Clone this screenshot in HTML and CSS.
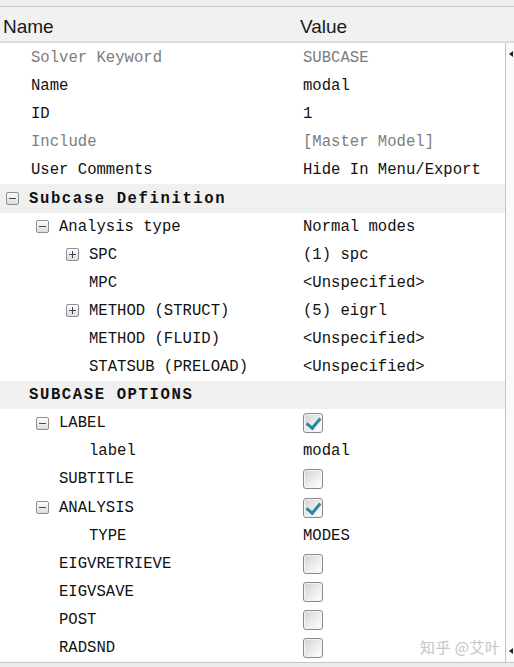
FILE: index.html
```html
<!DOCTYPE html>
<html>
<head>
<meta charset="utf-8">
<link rel="stylesheet" href="styles.css">
</head>
<body>
<div class="panel">
  <div class="topstrip"></div>
  <div class="header">
    <div class="hname">Name</div>
    <div class="hvalue">Value</div>
  </div>
  <div class="body">
    <div class="list">
      <div class="row"><div class="n prop dim">Solver Keyword</div><div class="v dim">SUBCASE</div></div>
      <div class="row"><div class="n prop">Name</div><div class="v">modal</div></div>
      <div class="row"><div class="n prop">ID</div><div class="v">1</div></div>
      <div class="row"><div class="n prop dim">Include</div><div class="v dim">[Master Model]</div></div>
      <div class="row"><div class="n prop">User Comments</div><div class="v">Hide In Menu/Export</div></div>
      <div class="row sect"><div class="n l0"><span class="slot"><span class="tog minus"></span></span><b>Subcase Definition</b></div><div class="v"></div></div>
      <div class="row"><div class="n l1"><span class="slot"><span class="tog minus"></span></span>Analysis type</div><div class="v">Normal modes</div></div>
      <div class="row"><div class="n l2"><span class="slot"><span class="tog plus"></span></span>SPC</div><div class="v">(1) spc</div></div>
      <div class="row"><div class="n l2"><span class="slot"></span>MPC</div><div class="v">&lt;Unspecified&gt;</div></div>
      <div class="row"><div class="n l2"><span class="slot"><span class="tog plus"></span></span>METHOD (STRUCT)</div><div class="v">(5) eigrl</div></div>
      <div class="row"><div class="n l2"><span class="slot"></span>METHOD (FLUID)</div><div class="v">&lt;Unspecified&gt;</div></div>
      <div class="row"><div class="n l2"><span class="slot"></span>STATSUB (PRELOAD)</div><div class="v">&lt;Unspecified&gt;</div></div>
      <div class="row sect"><div class="n l0"><span class="slot"></span><b>SUBCASE OPTIONS</b></div><div class="v"></div></div>
      <div class="row"><div class="n l1"><span class="slot"><span class="tog minus"></span></span>LABEL</div><div class="v"><span class="cb on"></span></div></div>
      <div class="row"><div class="n l2"><span class="slot"></span>label</div><div class="v">modal</div></div>
      <div class="row"><div class="n l1"><span class="slot"></span>SUBTITLE</div><div class="v"><span class="cb"></span></div></div>
      <div class="row"><div class="n l1"><span class="slot"><span class="tog minus"></span></span>ANALYSIS</div><div class="v"><span class="cb on"></span></div></div>
      <div class="row"><div class="n l2"><span class="slot"></span>TYPE</div><div class="v">MODES</div></div>
      <div class="row"><div class="n l1"><span class="slot"></span>EIGVRETRIEVE</div><div class="v"><span class="cb"></span></div></div>
      <div class="row"><div class="n l1"><span class="slot"></span>EIGVSAVE</div><div class="v"><span class="cb"></span></div></div>
      <div class="row"><div class="n l1"><span class="slot"></span>POST</div><div class="v"><span class="cb"></span></div></div>
      <div class="row"><div class="n l1"><span class="slot"></span>RADSND</div><div class="v"><span class="cb"></span></div></div>
    </div>
    <div class="scroll">
      <span class="arrow up"></span>
      <span class="arrow down"></span>
    </div>
  </div>
  <div class="bottom"></div>
  <div class="watermark">知乎 @艾叶</div>
</div>
</body>
</html>
```
FILE: styles.css
```css
html, body {
  margin: 0;
  padding: 0;
  background: #ffffff;
}
.panel {
  position: relative;
  width: 514px;
  height: 667px;
  overflow: hidden;
  font-family: "Liberation Mono", "DejaVu Sans Mono", monospace;
  font-size: 15.6px;
  color: #111;
}
.topstrip {
  height: 6px;
  background: #ededed;
  border-bottom: 1px solid #c6c6c6;
}
.header {
  display: grid;
  grid-template-columns: 300px 1fr;
  height: 34px;
  align-items: center;
  background: #f1f1f1;
  border-bottom: 2px solid #dcdcdc;
  font-family: "Liberation Sans", Arial, sans-serif;
  font-size: 19px;
  color: #1a1a1a;
}
.hname { padding-left: 3px; padding-top: 5px; }
.hvalue { padding-top: 5px; }
.body {
  display: flex;
  height: 619px;
}
.list {
  width: 505px;
  padding-top: 1px;
}
.row {
  display: grid;
  grid-template-columns: 302px 1fr;
  height: 28.1px;
  align-items: center;
  white-space: pre;
}
.row.sect {
  background: #f0f0f0;
}
.n {
  display: flex;
  align-items: center;
}
.v {
  display: flex;
  align-items: center;
  padding-left: 1px;
}
.prop { padding-left: 31px; }
.l0 { padding-left: 6px; }
.l1 { padding-left: 36px; }
.l2 { padding-left: 66px; }
.slot {
  display: inline-flex;
  align-items: center;
  width: 23px;
  flex: none;
}
.dim { color: #7d7d7d; }
b {
  font-weight: bold;
  letter-spacing: 1.6px;
  color: #111;
}
.tog {
  position: relative;
  width: 11px;
  height: 11px;
  border: 1px solid #8e8f8f;
  border-radius: 2px;
  background: linear-gradient(#fdfdfd, #dcdcdc);
  box-sizing: content-box;
}
.tog::before {
  content: "";
  position: absolute;
  left: 2px;
  top: 5px;
  width: 7px;
  height: 1px;
  background: #3a4a66;
}
.tog.plus::after {
  content: "";
  position: absolute;
  left: 5px;
  top: 2px;
  width: 1px;
  height: 7px;
  background: #3a4a66;
}
.cb {
  position: relative;
  display: inline-block;
  width: 18px;
  height: 18px;
  border: 1px solid #8a8a8a;
  border-radius: 3px;
  background: linear-gradient(135deg, #d2d2d2, #f4f4f4 70%, #ffffff);
  box-shadow: inset 0 0 0 1px #f4f4f4;
}
.cb.on::after {
  content: "";
  position: absolute;
  left: 5px;
  top: 1px;
  width: 6px;
  height: 11px;
  border-right: 3px solid #2a86a6;
  border-bottom: 3px solid #2a86a6;
  transform: rotate(40deg);
}
.scroll {
  position: relative;
  flex: 1;
  border-left: 1px solid #c4c4c4;
  background: #fafafa;
}
.arrow {
  position: absolute;
  left: 3px;
  width: 0;
  height: 0;
  border-top: 3px solid transparent;
  border-bottom: 3px solid transparent;
  border-right: 4px solid #222;
}
.arrow.up { top: 8px; }
.arrow.down { bottom: 8px; }
.bottom {
  height: 4px;
  border-top: 1px solid #c6c6c6;
  background: #ececec;
}
.watermark {
  position: absolute;
  left: 420px;
  top: 636px;
  font-family: "Noto Sans CJK SC", sans-serif;
  font-size: 15px;
  color: #c8c8c8;
  text-shadow: 0 0 1px #eee;
  letter-spacing: 0.5px;
}
```
